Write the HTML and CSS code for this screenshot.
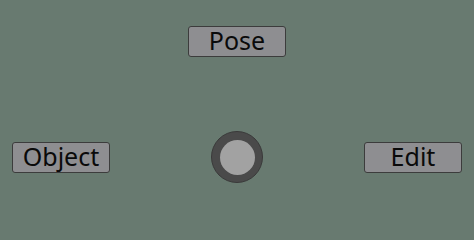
FILE: index.html
```html
<!DOCTYPE html>
<html>
<head>
<meta charset="utf-8">
<link rel="stylesheet" href="styles.css">
</head>
<body>
<div class="pie">
  <div class="top-row">
    <div class="btn">Pose</div>
  </div>
  <div class="bottom-row">
    <div class="btn">Object</div>
    <div class="ring"><div class="core"></div></div>
    <div class="btn">Edit</div>
  </div>
</div>
</body>
</html>
```
FILE: styles.css
```css
html, body {
  margin: 0;
  padding: 0;
  width: 474px;
  height: 208px;
  background: #687a70;
  overflow: hidden;
}
.pie {
  display: flex;
  flex-direction: column;
  padding-top: 26px;
  box-sizing: border-box;
  height: 208px;
}
.top-row {
  display: flex;
  justify-content: center;
}
.bottom-row {
  display: flex;
  justify-content: space-between;
  align-items: center;
  padding: 0 12px;
  margin-top: 74px;
}
.btn {
  width: 98px;
  height: 31px;
  box-sizing: border-box;
  border: 1px solid #3c3c3c;
  border-radius: 3px;
  background: #8e8e91;
  color: #0a0a0a;
  font-family: "Noto Sans", "Open Sans", sans-serif;
  font-weight: 400;
  font-size: 25px;
  line-height: 26px;
  text-align: center;
}
.ring {
  width: 52px;
  height: 52px;
  box-sizing: border-box;
  border-radius: 50%;
  background: #4a4a4a;
  border: 1px solid #3a3a3a;
  display: flex;
  align-items: center;
  justify-content: center;
}
.core {
  width: 35px;
  height: 35px;
  border-radius: 50%;
  background: #a2a2a2;
}
```
